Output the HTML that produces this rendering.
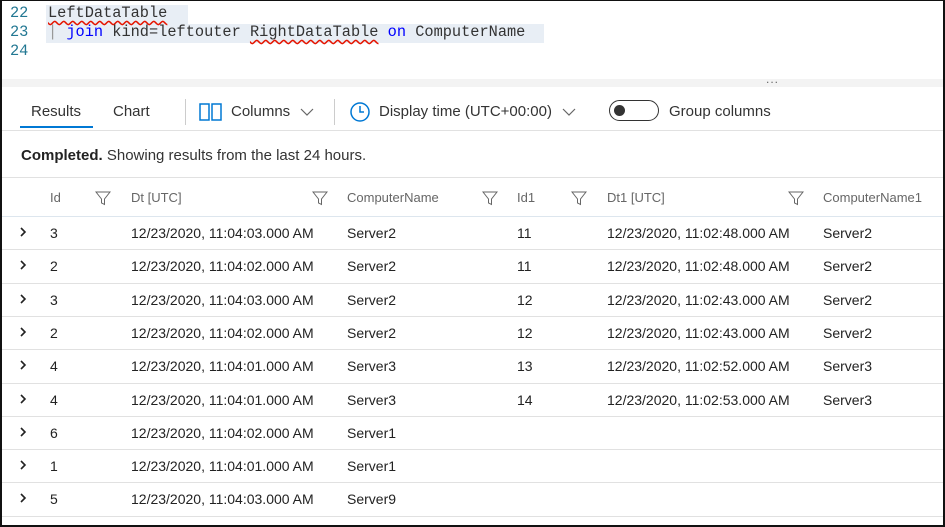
<!DOCTYPE html>
<html><head><style>
*{margin:0;padding:0;box-sizing:border-box}
body{width:945px;height:527px;overflow:hidden;background:#fff;font-family:"Liberation Sans",sans-serif;position:relative}
.frame{position:absolute;left:0;top:0;width:945px;height:527px;border:2px solid #111;border-top:1px solid #111}
.code{position:absolute;left:0;top:4px;font-family:"Liberation Mono",monospace;font-size:15.3px;line-height:19px;color:#333}
.ln{position:absolute;left:10px;color:#237893;width:22px}
.tx{position:absolute;left:48px;white-space:pre}
.sel{position:absolute;background:#e8eef5}
.sq{text-decoration:underline wavy #e51400;text-decoration-skip-ink:none;text-underline-offset:3px}
.kw{color:#0000ff}
.band{position:absolute;left:2px;right:2px;top:79px;height:8px;background:#f3f3f3}
.a{position:absolute;white-space:nowrap}
.tb{font-size:15px;color:#333;top:103px}
.hl{position:absolute;height:1px;background:#e1e1e1;left:2px;right:2px}
.h{position:absolute;top:190px;font-size:13px;color:#666}
.c{position:absolute;font-size:14px;color:#222}
.f{position:absolute;top:190px}
</style></head><body>
<div class="sel" style="left:46px;top:5px;width:142px;height:19px"></div>
<div class="sel" style="left:46px;top:24px;width:498px;height:19px"></div>
<div class="code">
<div class="ln" style="top:0">22</div><div class="tx" style="top:0"><span class="sq">LeftDataTable</span></div>
<div class="ln" style="top:19px">23</div><div class="tx" style="top:19px"><span style="color:#999">|</span> <span class="kw">join</span> kind=leftouter <span class="sq">RightDataTable</span> <span class="kw">on</span> ComputerName</div>
<div class="ln" style="top:38px">24</div>
</div>
<div class="band"></div>
<div class="a" style="left:766px;top:72px;font-size:12px;color:#666;letter-spacing:1px">...</div>
<div class="a tb" style="left:31px">Results</div>
<div style="position:absolute;left:20px;top:126px;width:73px;height:2px;background:#0078d4"></div>
<div class="a tb" style="left:113px">Chart</div>
<div style="position:absolute;left:185px;top:99px;width:1px;height:26px;background:#ccc"></div>
<svg class="a" style="left:199px;top:103px" width="24" height="18"><rect x="1" y="1" width="9" height="16" fill="none" stroke="#0078d4" stroke-width="1.5"/><rect x="13" y="1" width="9" height="16" fill="none" stroke="#0078d4" stroke-width="1.5"/></svg>
<div class="a tb" style="left:231px">Columns</div>
<svg class="a" style="left:300px;top:107px" width="14" height="10"><path d="M1 2l6 6 6-6" fill="none" stroke="#666" stroke-width="1.2"/></svg>
<div style="position:absolute;left:334px;top:99px;width:1px;height:26px;background:#ccc"></div>
<svg class="a" style="left:349px;top:101px" width="22" height="22"><circle cx="11" cy="11" r="9" fill="none" stroke="#0078d4" stroke-width="1.5"/><path d="M11 5v6h4" fill="none" stroke="#0078d4" stroke-width="1.5"/></svg>
<div class="a tb" style="left:379px">Display time (UTC+00:00)</div>
<svg class="a" style="left:562px;top:107px" width="14" height="10"><path d="M1 2l6 6 6-6" fill="none" stroke="#666" stroke-width="1.2"/></svg>
<div class="a" style="left:609px;top:100px;width:50px;height:21px;border:1.5px solid #333;border-radius:11px"></div>
<div class="a" style="left:614px;top:105px;width:11px;height:11px;border-radius:50%;background:#333"></div>
<div class="a tb" style="left:669px">Group columns</div>
<div class="hl" style="top:130px"></div>
<div class="a" style="left:21px;top:147px;font-size:15px;color:#333"><b style="font-weight:bold;color:#222">Completed.</b> Showing results from the last 24 hours.</div>
<div class="hl" style="top:177px"></div>
<div class="hl" style="top:216px;background:#dde6ee"></div>
<div class="h" style="left:50px">Id</div>
<div class="h" style="left:131px">Dt [UTC]</div>
<div class="h" style="left:347px">ComputerName</div>
<div class="h" style="left:517px">Id1</div>
<div class="h" style="left:607px">Dt1 [UTC]</div>
<div class="h" style="left:823px">ComputerName1</div>
<svg class="f" style="left:95px" width="16" height="16"><path d="M1 2h14L9.5 9v5.5L6.5 13V9z" fill="none" stroke="#666"/></svg>
<svg class="f" style="left:312px" width="16" height="16"><path d="M1 2h14L9.5 9v5.5L6.5 13V9z" fill="none" stroke="#666"/></svg>
<svg class="f" style="left:482px" width="16" height="16"><path d="M1 2h14L9.5 9v5.5L6.5 13V9z" fill="none" stroke="#666"/></svg>
<svg class="f" style="left:571px" width="16" height="16"><path d="M1 2h14L9.5 9v5.5L6.5 13V9z" fill="none" stroke="#666"/></svg>
<svg class="f" style="left:788px" width="16" height="16"><path d="M1 2h14L9.5 9v5.5L6.5 13V9z" fill="none" stroke="#666"/></svg>
<div id="rows"></div>
<script>
var d=[["3","12/23/2020, 11:04:03.000 AM","Server2","11","12/23/2020, 11:02:48.000 AM","Server2"],
["2","12/23/2020, 11:04:02.000 AM","Server2","11","12/23/2020, 11:02:48.000 AM","Server2"],
["3","12/23/2020, 11:04:03.000 AM","Server2","12","12/23/2020, 11:02:43.000 AM","Server2"],
["2","12/23/2020, 11:04:02.000 AM","Server2","12","12/23/2020, 11:02:43.000 AM","Server2"],
["4","12/23/2020, 11:04:01.000 AM","Server3","13","12/23/2020, 11:02:52.000 AM","Server3"],
["4","12/23/2020, 11:04:01.000 AM","Server3","14","12/23/2020, 11:02:53.000 AM","Server3"],
["6","12/23/2020, 11:04:02.000 AM","Server1","","",""],
["1","12/23/2020, 11:04:01.000 AM","Server1","","",""],
["5","12/23/2020, 11:04:03.000 AM","Server9","","",""]];
var xs=[50,131,347,517,607,823],h="";
d.forEach(function(r,i){var y=216+i*33.3;
h+='<svg style="position:absolute;left:19px;top:'+(y+11)+'px" width="8" height="10"><path d="M2 1l4 4-4 4" fill="none" stroke="#222" stroke-width="1.6"/></svg>';
r.forEach(function(t,j){h+='<div class="c" style="left:'+xs[j]+'px;top:'+(y+9)+'px">'+t+'</div>'});
h+='<div class="hl" style="top:'+Math.round(y+33.3)+'px"></div>';});
document.getElementById('rows').innerHTML=h;
</script>
<div class="frame"></div>
</body></html>
